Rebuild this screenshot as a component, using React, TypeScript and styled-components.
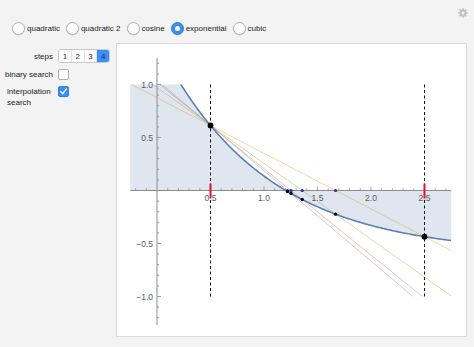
import React from "react";
import styled, { createGlobalStyle } from "styled-components";

const GlobalStyle = createGlobalStyle`
  html, body {
    margin: 0;
    padding: 0;
    background: #f3f3f3;
  }
  body {
    font-family: "Liberation Sans", Arial, sans-serif;
    color: #222;
  }
`;

const Page = styled.div`
  width: 474px;
  height: 347px;
  box-sizing: border-box;
  display: flex;
  flex-direction: column;
  background: #f3f3f3;
`;

const TopBar = styled.div`
  height: 20px;
  box-sizing: border-box;
  padding: 8px 6px 0 0;
  display: flex;
  justify-content: flex-end;
  align-items: flex-start;
`;

const RadioRow = styled.div`
  height: 16px;
  padding-left: 12px;
  display: flex;
  align-items: center;
  gap: 6px;
  font-size: 8px;
`;

const RadioOption = styled.label`
  display: flex;
  align-items: center;
  gap: 2px;
`;

const RadioCircle = styled.span<{ $on?: boolean }>`
  width: 13px;
  height: 13px;
  box-sizing: border-box;
  border-radius: 50%;
  border: 1px solid ${(p) => (p.$on ? "#2f7ee6" : "#b0b0b0")};
  background: ${(p) => (p.$on ? "#3a8ff2" : "#fff")};
  display: flex;
  align-items: center;
  justify-content: center;
  box-shadow: 0 0.5px 1px rgba(0, 0, 0, 0.12);
  &::after {
    content: "";
    width: 5px;
    height: 5px;
    border-radius: 50%;
    background: #fff;
    display: ${(p) => (p.$on ? "block" : "none")};
  }
`;

const Main = styled.div`
  margin-top: 7px;
  display: flex;
  align-items: flex-start;
`;

const Controls = styled.div`
  width: 116px;
  padding-top: 6px;
  display: grid;
  grid-template-columns: 53px auto;
  column-gap: 5px;
  row-gap: 6px;
  align-items: center;
  font-size: 8px;
  line-height: 11px;
`;

const Label = styled.span<{ $wrap?: boolean }>`
  justify-self: end;
  text-align: ${(p) => (p.$wrap ? "left" : "right")};
  width: ${(p) => (p.$wrap ? "46px" : "auto")};
  align-self: ${(p) => (p.$wrap ? "start" : "center")};
`;

const Segmented = styled.div`
  display: flex;
  width: 52px;
  height: 14px;
  box-sizing: border-box;
  border: 1px solid #c8c8c8;
  border-radius: 3px;
  overflow: hidden;
  background: #fff;
`;

const Segment = styled.span<{ $on?: boolean }>`
  flex: 1;
  display: flex;
  align-items: center;
  justify-content: center;
  font-size: 8px;
  color: ${(p) => (p.$on ? "#14305c" : "#333")};
  background: ${(p) => (p.$on ? "#3a8ff2" : "#fff")};
  border-left: 1px solid #e2e2e2;
  &:first-child {
    border-left: none;
  }
`;

const CheckBox = styled.span<{ $on?: boolean; $top?: boolean }>`
  width: 11px;
  height: 11px;
  box-sizing: border-box;
  border-radius: 2px;
  border: 1px solid ${(p) => (p.$on ? "#2f7ee6" : "#b0b0b0")};
  background: ${(p) => (p.$on ? "#3a8ff2" : "#fff")};
  align-self: ${(p) => (p.$top ? "start" : "center")};
  display: flex;
  align-items: center;
  justify-content: center;
`;

const Panel = styled.div`
  width: 351px;
  height: 294px;
  box-sizing: border-box;
  border: 1px solid #dadada;
  background: #fff;
`;

const Gear = () => (
  <svg width="10" height="10" viewBox="0 0 10 10">
    <g fill="#c2c2c2">
      {[0, 45, 90, 135, 180, 225, 270, 315].map((r) => (
        <rect key={r} x="4.2" y="0.3" width="1.6" height="2" transform={`rotate(${r} 5 5)`} />
      ))}
      <circle cx="5" cy="5" r="3.4" />
    </g>
    <circle cx="5" cy="5" r="1.5" fill="#f3f3f3" />
  </svg>
);

const Check = () => (
  <svg width="9" height="9" viewBox="0 0 9 9">
    <path d="M1.8 4.8 L3.7 6.7 L7.4 1.9" fill="none" stroke="#fff" strokeWidth="1.4" strokeLinecap="round" strokeLinejoin="round" />
  </svg>
);

// plot mapping (panel inner coordinates)
const X0 = 40;
const Y0 = 146.5;
const SX = 107;
const SY = 106;
const px = (x: number) => X0 + SX * x;
const py = (y: number) => Y0 - SY * y;
const f = (x: number) => 2 * Math.exp(-x) - 0.6;

const XMIN = -0.25;
const XMAX = 2.75;

const lineColors = ["#e19c24", "#8fb032", "#eb6235", "#8778b3"];

function falsi(a: number, b: number, n: number) {
  const out: { b: number; x: number }[] = [];
  for (let i = 0; i < n; i++) {
    const x = a - (f(a) * (b - a)) / (f(b) - f(a));
    out.push({ b, x });
    b = x;
  }
  return out;
}

const Plot = () => {
  const a = 0.5;
  const b = 2.5;
  const iters = falsi(a, b, 4);

  const curve: string[] = [];
  for (let i = 0; i <= 200; i++) {
    const x = 0.15 + ((XMAX - 0.15) * i) / 200;
    curve.push(`${px(x).toFixed(2)},${py(f(x)).toFixed(2)}`);
  }
  const xTop = Math.log(2 / 1.6);
  const fill: string[] = [`${px(XMIN)},${py(0)}`, `${px(XMIN)},${py(1)}`, `${px(xTop)},${py(1)}`];
  for (let i = 0; i <= 200; i++) {
    const x = xTop + ((XMAX - xTop) * i) / 200;
    fill.push(`${px(x).toFixed(2)},${py(f(x)).toFixed(2)}`);
  }
  fill.push(`${px(XMAX)},${py(0)}`);

  const xTicks: number[] = [];
  for (let i = -2; i <= 27; i++) if (i !== 0) xTicks.push(i / 10);
  const yTicks: number[] = [];
  for (let i = -12; i <= 12; i++) if (i !== 0) yTicks.push(i / 10);
  const isMajor = (v: number) => Math.abs(Math.round(v * 10) % 5) === 0;

  return (
    <svg width="349" height="292" viewBox="0 0 349 292" style={{ display: "block" }}>
      <defs>
        <clipPath id="pr">
          <rect x={px(XMIN)} y={py(1)} width={px(XMAX) - px(XMIN)} height={py(-1) - py(1)} />
        </clipPath>
      </defs>
      <polygon points={fill.join(" ")} fill="#dfe6f0" />

      {/* axes */}
      <g stroke="#8c8c8c" strokeWidth="1">
        <line x1={px(XMIN)} y1={py(0)} x2={px(XMAX)} y2={py(0)} />
        <line x1={px(0)} y1={py(1.25)} x2={px(0)} y2={py(-1.27)} />
        {xTicks.map((t) => (
          <line key={`x${t}`} x1={px(t)} y1={py(0)} x2={px(t)} y2={py(0) - (isMajor(t) ? 4 : 2.2)} strokeWidth="0.8" />
        ))}
        {yTicks.map((t) => (
          <line key={`y${t}`} x1={px(0)} y1={py(t)} x2={px(0) + (isMajor(t) ? 4 : 2.2)} y2={py(t)} strokeWidth="0.8" />
        ))}
      </g>
      <g fill="#5a5a5a" fontSize="8.5" fontFamily="Liberation Sans, Arial, sans-serif">
        {[0.5, 1, 1.5, 2, 2.5].map((t) => (
          <text key={`lx${t}`} x={px(t)} y={py(0) + 10} textAnchor="middle">
            {t.toFixed(1)}
          </text>
        ))}
        {[1, 0.5, -0.5, -1].map((t) => (
          <text key={`ly${t}`} x={px(0) - 4} y={py(t) + 3} textAnchor="end">
            {t < 0 ? `\u2212${Math.abs(t).toFixed(1)}` : t.toFixed(1)}
          </text>
        ))}
      </g>

      {/* secant lines */}
      <g clipPath="url(#pr)" strokeWidth="1" fill="none">
        {iters.map((it, i) => {
          const m = (f(it.b) - f(a)) / (it.b - a);
          const y1 = f(a) + m * (XMIN - a);
          const y2 = f(a) + m * (XMAX - a);
          return (
            <line key={i} x1={px(XMIN)} y1={py(y1)} x2={px(XMAX)} y2={py(y2)} stroke={lineColors[i]} strokeOpacity="0.4" />
          );
        })}
      </g>

      <polyline points={curve.join(" ")} fill="none" stroke="#5e81b5" strokeWidth="1.6" clipPath="url(#pr)" />

      {/* bracket markers */}
      <g stroke="#111" strokeWidth="1" strokeDasharray="3 2.5">
        <line x1={px(0.5)} y1={py(1)} x2={px(0.5)} y2={py(-1)} />
        <line x1={px(2.5)} y1={py(1)} x2={px(2.5)} y2={py(-1)} />
      </g>
      <g stroke="#e3132f" strokeWidth="2">
        <line x1={px(0.5)} y1={py(0) - 7} x2={px(0.5)} y2={py(0) + 8} />
        <line x1={px(2.5)} y1={py(0) - 7} x2={px(2.5)} y2={py(0) + 8} />
      </g>

      {iters.map((it, i) => (
        <circle key={`b${i}`} cx={px(it.x)} cy={py(0)} r="1.6" fill="#2a2aa8" />
      ))}
      {iters.map((it, i) => (
        <circle key={`c${i}`} cx={px(it.x)} cy={py(f(it.x))} r="1.7" fill="#000" />
      ))}
      <circle cx={px(a)} cy={py(f(a))} r="2.9" fill="#000" />
      <circle cx={px(b)} cy={py(f(b))} r="2.9" fill="#000" />
    </svg>
  );
};

const fnOptions = ["quadratic", "quadratic 2", "cosine", "exponential", "cubic"];

export default function App() {
  const selected = "exponential";
  const step = 4;
  return (
    <>
      <GlobalStyle />
      <Page>
        <TopBar>
          <Gear />
        </TopBar>
        <RadioRow>
          {fnOptions.map((o) => (
            <RadioOption key={o}>
              <RadioCircle $on={o === selected} />
              {o}
            </RadioOption>
          ))}
        </RadioRow>
        <Main>
          <Controls>
            <Label>steps</Label>
            <Segmented>
              {[1, 2, 3, 4].map((n) => (
                <Segment key={n} $on={n === step}>
                  {n}
                </Segment>
              ))}
            </Segmented>
            <Label>binary search</Label>
            <CheckBox />
            <Label $wrap>
              interpolation
              <br />
              search
            </Label>
            <CheckBox $on $top>
              <Check />
            </CheckBox>
          </Controls>
          <Panel>
            <Plot />
          </Panel>
        </Main>
      </Page>
    </>
  );
}
